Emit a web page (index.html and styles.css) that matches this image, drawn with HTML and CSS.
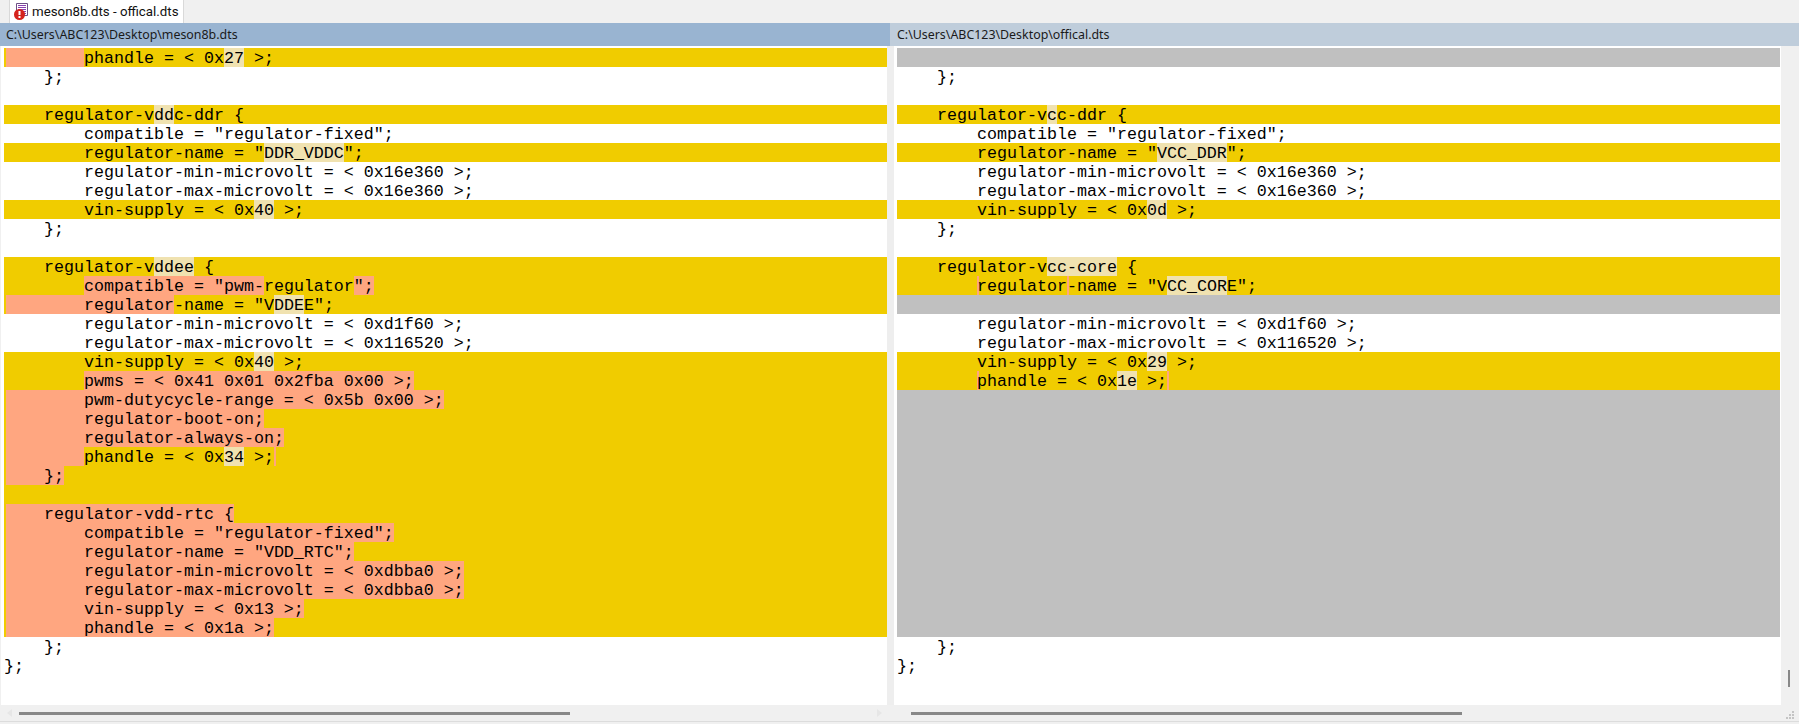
FILE: index.html
```html
<!DOCTYPE html>
<html lang="en">
<head>
    <meta charset="UTF-8">
    <title>meson8b.dts - offical.dts</title>
    <link rel="stylesheet" href="styles.css">
</head>
<body>
    <div class="tabbar">
        <div class="tab">
            <svg class="tab-icon" width="15" height="17" viewBox="0 0 15 17">
                <path d="M2.5 .5H13.5V12.5H2.5Z" fill="#fff" stroke="#6d4f86"/>
                <path d="M4 2.5H12M4 4.5H12M4 6.5H12M9 8.5H12M10 10.5H12" stroke="#8a3fb0" stroke-width="1"/>
                <circle cx="5.5" cy="11.5" r="5.5" fill="#d5231d"/>
                <path d="M5.5 8V12M5.5 13V15" stroke="#fff" stroke-width="2"/>
            </svg>
            <span>meson8b.dts - offical.dts</span>
        </div>
    </div>

    <div class="headers">
        <div class="header header-left">C:\Users\ABC123\Desktop\meson8b.dts</div>
        <div class="header header-right">C:\Users\ABC123\Desktop\offical.dts</div>
    </div>

    <div class="panes">
        <div class="pane pane-left">
<div class="row chg"><span class="del edge">        </span>phandle = &lt; 0x<span class="cr">27</span> &gt;;</div>
<div class="row">    };</div>
<div class="row"> </div>
<div class="row chg">    regulator-v<span class="cr">dd</span>c-ddr {</div>
<div class="row">        compatible = "regulator-fixed";</div>
<div class="row chg">        regulator-name = "<span class="cr">DDR_VDDC</span>";</div>
<div class="row">        regulator-min-microvolt = &lt; 0x16e360 &gt;;</div>
<div class="row">        regulator-max-microvolt = &lt; 0x16e360 &gt;;</div>
<div class="row chg">        vin-supply = &lt; 0x<span class="cr">40</span> &gt;;</div>
<div class="row">    };</div>
<div class="row"> </div>
<div class="row chg">    regulator-v<span class="cr">ddee</span> {</div>
<div class="row chg">        <span class="del">compatible = "pwm-</span>regulator<span class="del">";</span></div>
<div class="row chg"><span class="del edge">        regulator</span>-name = "V<span class="cr">DDE</span>E";</div>
<div class="row">        regulator-min-microvolt = &lt; 0xd1f60 &gt;;</div>
<div class="row">        regulator-max-microvolt = &lt; 0x116520 &gt;;</div>
<div class="row chg">        vin-supply = &lt; 0x<span class="cr">40</span> &gt;;</div>
<div class="row chg">        <span class="del">pwms = &lt; 0x41 0x01 0x2fba 0x00 &gt;;</span></div>
<div class="row chg"><span class="del edge">        pwm-dutycycle-range = &lt; 0x5b 0x00 &gt;;</span></div>
<div class="row chg"><span class="del edge">        regulator-boot-on;</span></div>
<div class="row chg"><span class="del edge">        regulator-always-on;</span></div>
<div class="row chg"><span class="del edge">        </span>phandle = &lt; 0x<span class="cr">34</span> &gt;;<i class="tick"></i></div>
<div class="row chg"><span class="del edge">    };</span></div>
<div class="row chg"> </div>
<div class="row chg"><span class="del edge">    regulator-vdd-rtc {</span></div>
<div class="row chg"><span class="del edge">        compatible = "regulator-fixed";</span></div>
<div class="row chg"><span class="del edge">        regulator-name = "VDD_RTC";</span></div>
<div class="row chg"><span class="del edge">        regulator-min-microvolt = &lt; 0xdbba0 &gt;;</span></div>
<div class="row chg"><span class="del edge">        regulator-max-microvolt = &lt; 0xdbba0 &gt;;</span></div>
<div class="row chg"><span class="del edge">        vin-supply = &lt; 0x13 &gt;;</span></div>
<div class="row chg"><span class="del edge">        phandle = &lt; 0x1a &gt;;</span></div>
<div class="row">    };</div>
<div class="row">};</div>
        </div>
        <div class="splitter"></div>
        <div class="pane pane-right">
<div class="row gap"> </div>
<div class="row">    };</div>
<div class="row"> </div>
<div class="row chg">    regulator-v<span class="cr">c</span>c-ddr {</div>
<div class="row">        compatible = "regulator-fixed";</div>
<div class="row chg">        regulator-name = "<span class="cr">VCC_DDR</span>";</div>
<div class="row">        regulator-min-microvolt = &lt; 0x16e360 &gt;;</div>
<div class="row">        regulator-max-microvolt = &lt; 0x16e360 &gt;;</div>
<div class="row chg">        vin-supply = &lt; 0x<span class="cr">0d</span> &gt;;</div>
<div class="row">    };</div>
<div class="row"> </div>
<div class="row chg">    regulator-v<span class="cr">cc-core</span> {</div>
<div class="row chg">        <i class="tick"></i>regulator<i class="tick"></i>-name = "V<span class="cr">CC_COR</span>E";</div>
<div class="row gap"> </div>
<div class="row">        regulator-min-microvolt = &lt; 0xd1f60 &gt;;</div>
<div class="row">        regulator-max-microvolt = &lt; 0x116520 &gt;;</div>
<div class="row chg">        vin-supply = &lt; 0x<span class="cr">29</span> &gt;;</div>
<div class="row chg">        <i class="tick"></i>phandle = &lt; 0x<span class="cr">1e</span> &gt;;<i class="tick"></i></div>
<div class="row gap"> </div>
<div class="row gap"> </div>
<div class="row gap"> </div>
<div class="row gap"> </div>
<div class="row gap"> </div>
<div class="row gap"> </div>
<div class="row gap"> </div>
<div class="row gap"> </div>
<div class="row gap"> </div>
<div class="row gap"> </div>
<div class="row gap"> </div>
<div class="row gap"> </div>
<div class="row gap"> </div>
<div class="row">    };</div>
<div class="row">};</div>
        </div>
        <div class="vscroll"><div class="vthumb"></div></div>
    </div>

    <div class="hscrolls">
        <div class="htrack htrack-left">
            <i class="arrow arrow-back"></i>
            <div class="hthumb"></div>
            <i class="arrow arrow-next"></i>
        </div>
        <div class="htrack htrack-right">
            <div class="hthumb"></div>
        </div>
        <svg class="grip" width="8" height="8" viewBox="0 0 8 8" fill="#c4c4c4">
            <rect x="6" y="0" width="2" height="2"/>
            <rect x="3" y="3" width="2" height="2"/>
            <rect x="6" y="3" width="2" height="2"/>
            <rect x="0" y="6" width="2" height="2"/>
            <rect x="3" y="6" width="2" height="2"/>
            <rect x="6" y="6" width="2" height="2"/>
        </svg>
    </div>
    <div class="statusline"></div>
</body>
</html>
```

FILE: styles.css
```css
html, body {
    margin: 0;
    height: 100%;
    overflow: hidden;
}

body {
    display: flex;
    flex-direction: column;
    background-color: #f0f0f0;
    font-family: 'Noto Sans', 'Open Sans', sans-serif;
    color: #111;
}

.tabbar {
    height: 23px;
    padding-left: 9px;
    box-sizing: border-box;
}

.tab {
    display: flex;
    align-items: center;
    gap: 3px;
    width: 175px;
    height: 23px;
    box-sizing: border-box;
    padding: 0 0 0 4px;
    background-color: #fff;
    border: 1px solid #d9d9d9;
    border-top: none;
    border-bottom: none;
    font-family: Roboto, 'Noto Sans', sans-serif;
    font-size: 13.3px;
    white-space: nowrap;
}

.tab-icon {
    flex: none;
}

.headers {
    display: grid;
    grid-template-columns: 890px 1fr;
    height: 23px;
    font-size: 12.4px;
    line-height: 23px;
}

.header {
    padding-left: 6px;
    color: #1a1a1a;
}

.header-left {
    background-color: #99b4d1;
}

.header-right {
    background-color: #bfcddb;
    padding-left: 7px;
}

.panes {
    display: flex;
    height: 659px;
    margin-left: 1px;
}

.pane {
    width: 883px;
    box-sizing: content-box;
    padding-top: 2px;
    background-color: #fff;
    font-family: 'Liberation Mono', 'Courier New', monospace;
    font-size: 16.66px;
    color: #000;
}

.pane-left {
    padding-left: 3px;
}

.pane-right {
    padding: 2px 1px 0 3px;
}

.splitter {
    width: 7px;
    background-color: #eee;
}

/* line-height is taller than the row so the baseline lands 15px down */
.row {
    height: 19px;
    line-height: 21px;
    white-space: pre;
}

.chg {
    background-color: #f0cc00;
}

.gap {
    background-color: #c0c0c0;
}

.del {
    display: inline-block;
    height: 19px;
    vertical-align: top;
    background-color: #ffa680;
}

.edge {
    box-shadow: inset 2px 0 0 #f0cc00;
}

.cr {
    display: inline-block;
    height: 19px;
    vertical-align: top;
    background-color: #f0e2b0;
}

.tick {
    display: inline-block;
    width: 2px;
    height: 19px;
    margin-right: -2px;
    vertical-align: top;
    background-color: #ffa680;
}

.vscroll {
    flex: 1;
    display: flex;
    flex-direction: column;
    justify-content: flex-end;
    align-items: center;
    padding-bottom: 18px;
    padding-right: 2px;
    background-color: #f0f0f0;
}

.vthumb {
    width: 2px;
    height: 17px;
    background-color: #888;
}

.hscrolls {
    display: flex;
    align-items: center;
    height: 16px;
    background-color: #f0f0f0;
}

.htrack {
    display: flex;
    align-items: center;
    height: 16px;
}

.htrack-left {
    width: 887px;
    padding-left: 7px;
    box-sizing: border-box;
}

.htrack-right {
    width: 894px;
    padding-left: 24px;
    box-sizing: border-box;
}

.hthumb {
    width: 551px;
    height: 3px;
    background-color: #888;
}

.arrow {
    width: 0;
    height: 0;
    border-top: 4px solid transparent;
    border-bottom: 4px solid transparent;
}

.arrow-back {
    margin-right: 7px;
    border-right: 5px solid #e6e6e6;
}

.arrow-next {
    margin-left: auto;
    margin-right: 5px;
    border-left: 5px solid #e6e6e6;
}

.grip {
    align-self: flex-start;
    margin: 6px 0 0 5px;
}

.statusline {
    height: 1px;
    background-color: #dcdcdc;
}
```
